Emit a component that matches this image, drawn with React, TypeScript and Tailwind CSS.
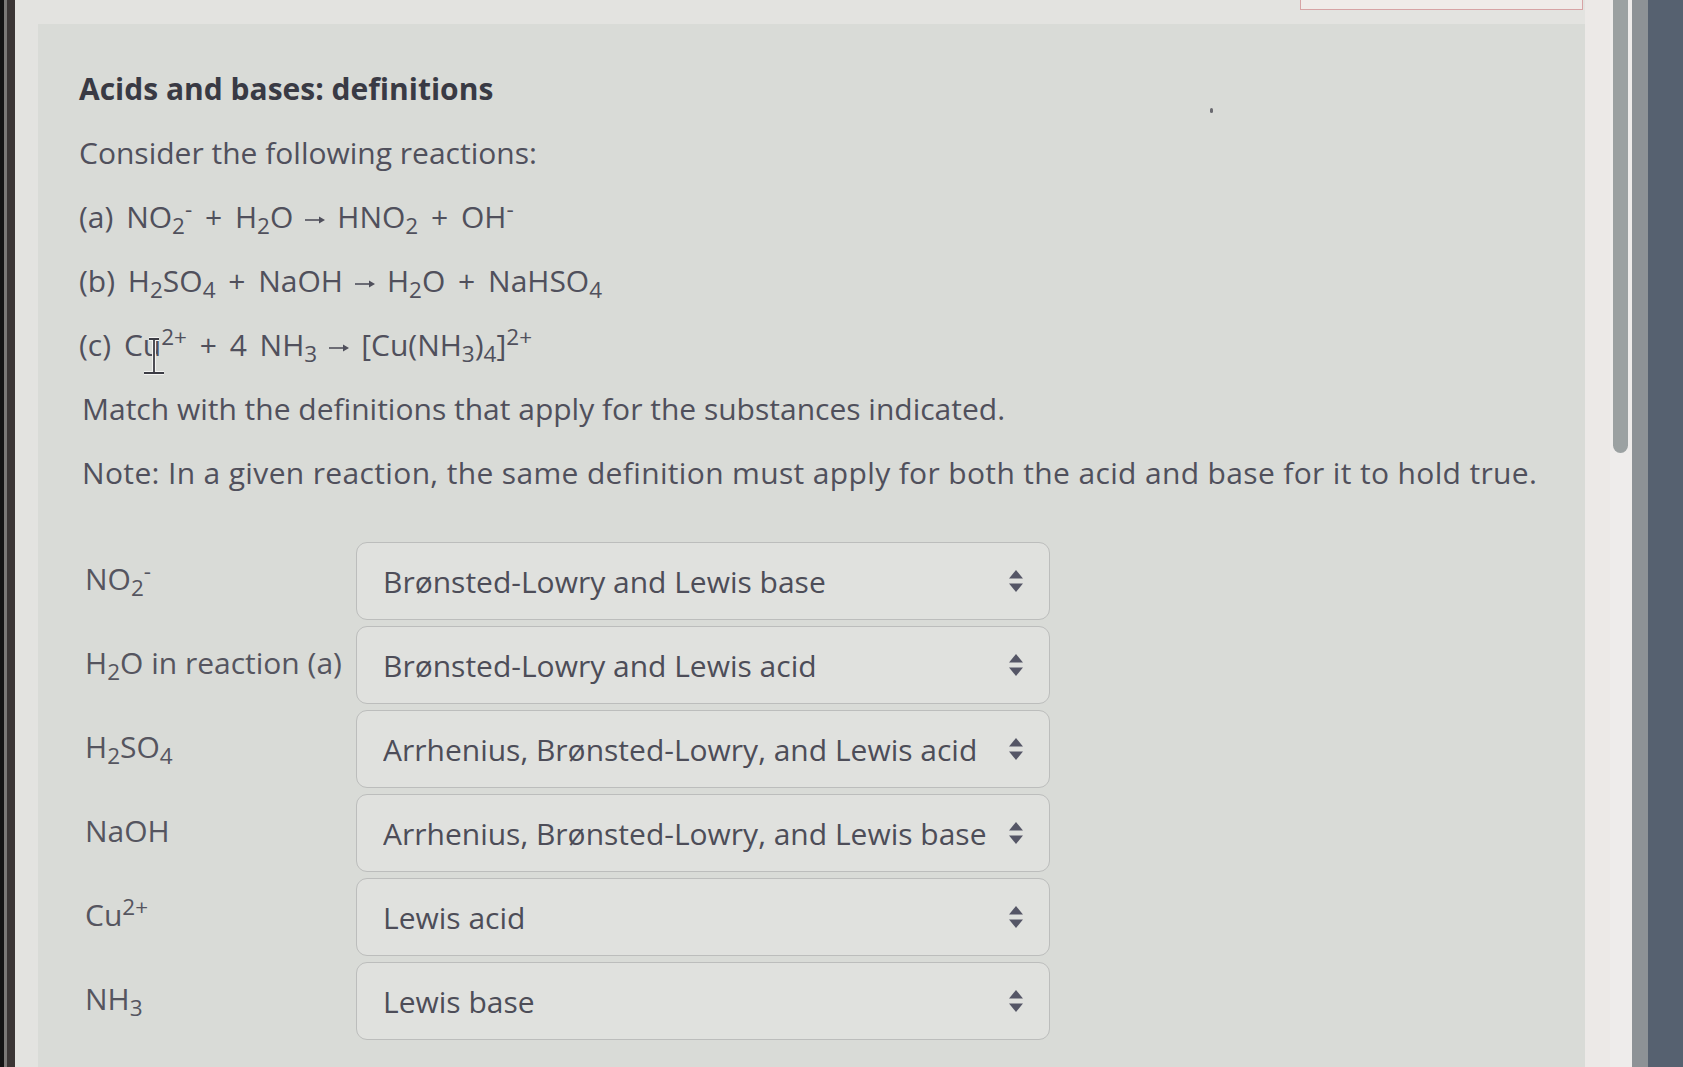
import React from "react";

const font = "font-['Open_Sans','Noto_Sans',sans-serif]";

const rows: { label: React.ReactNode; value: string }[] = [
  { label: <>NO<sub>2</sub><sup>-</sup></>, value: "Brønsted-Lowry and Lewis base" },
  { label: <>H<sub>2</sub>O in reaction (a)</>, value: "Brønsted-Lowry and Lewis acid" },
  { label: <>H<sub>2</sub>SO<sub>4</sub></>, value: "Arrhenius, Brønsted-Lowry, and Lewis acid" },
  { label: <>NaOH</>, value: "Arrhenius, Brønsted-Lowry, and Lewis base" },
  { label: <>Cu<sup>2+</sup></>, value: "Lewis acid" },
  { label: <>NH<sub>3</sub></>, value: "Lewis base" },
];

function Arrows() {
  return (
    <svg
      width="16"
      height="24"
      viewBox="0 0 16 24"
      className="pointer-events-none absolute right-[26px] top-1/2 -translate-y-1/2"
    >
      <path d="M8 1 L15 9.5 H1 Z" fill="#555666" />
      <path d="M1 14.5 H15 L8 23 Z" fill="#555666" />
    </svg>
  );
}

// reaction arrow
function Arrow() {
  return (
    <svg width="22" height="10" viewBox="0 0 22 10" className="mx-[11px] inline-block align-middle">
      <path d="M1 5 H17" stroke="#50505c" strokeWidth="1.6" />
      <path d="M15 1.5 L21 5 L15 8.5 Z" fill="#50505c" />
    </svg>
  );
}

function IBeam() {
  return (
    <svg
      width="26"
      height="42"
      viewBox="0 0 26 42"
      className="pointer-events-none absolute left-[17px] top-[12px]"
    >
      <g stroke="#f4f4f2" strokeWidth="4" fill="none">
        <path d="M8 3 H18 M13 3 V37 M3 37 H23" />
      </g>
      <g stroke="#3c3c44" strokeWidth="1.8" fill="none">
        <path d="M8 3 H18 M13 3 V37 M3 37 H23" />
      </g>
    </svg>
  );
}

export default function App() {
  return (
    <div className={`flex h-[1067px] w-full overflow-hidden bg-[#e3e3e0] ${font}`}>
      {/* left bezel */}
      <div className="flex h-full w-[15px] shrink-0">
        <div className="w-[4px] bg-[#141414]" />
        <div className="w-[3px] bg-[#7a7876]" />
        <div className="w-[8px] bg-[#3b3635]" />
      </div>

      {/* page */}
      <div className="flex h-full w-[1570px] shrink-0 flex-col">
        <div className="flex h-[24px] shrink-0 justify-end pr-[2px]">
          <div className="h-[10px] w-[283px] border-x border-b border-[#d7a3a5] bg-[#f0ebe9]" />
        </div>
        <div className="flex flex-1">
          <div className="w-[23px] shrink-0" />
          <div className="relative flex-1 bg-[#d9dbd7] pl-[41px] pt-[42px] text-[#50505c]">
            <span className="absolute left-[1172px] top-[84px] h-[5px] w-[3px] rounded-full bg-[#6a6a70]" />

            <div className="flex flex-col gap-[19px] text-[30px] leading-[45px]">
              <h1 className="font-bold text-[#393a44]">Acids and bases: definitions</h1>
              <p>Consider the following reactions:</p>
              <p className="[word-spacing:5px]">
                (a) NO<sub>2</sub><sup>-</sup> + H<sub>2</sub>O
                <Arrow />
                HNO<sub>2</sub> + OH<sup>-</sup>
              </p>
              <p className="[word-spacing:5px]">
                (b) H<sub>2</sub>SO<sub>4</sub> + NaOH
                <Arrow />
                H<sub>2</sub>O + NaHSO<sub>4</sub>
              </p>
              <p className="[word-spacing:5px]">
                (c){" "}
                <span className="relative">
                  Cu<sup>2+</sup>
                  <IBeam />
                </span>{" "}
                + 4 NH<sub>3</sub>
                <Arrow />
                [Cu(NH<sub>3</sub>)<sub>4</sub>]<sup>2+</sup>
              </p>
              <p className="pl-[3px]">Match with the definitions that apply for the substances indicated.</p>
              <p className="pl-[3px] tracking-[0.35px]">
                Note: In a given reaction, the same definition must apply for both the acid and base for it to hold true.
              </p>
            </div>

            <div className="mt-[47px] grid grid-cols-[277px_694px] gap-y-[6px] text-[30px]">
              {rows.map((row, i) => (
                <React.Fragment key={i}>
                  <div className="flex items-center pb-[4px] pl-[6px] leading-none text-[#55555f]">
                    <span>{row.label}</span>
                  </div>
                  <div className="relative">
                    <select
                      defaultValue={row.value}
                      className="h-[78px] w-full appearance-none rounded-[11px] border-[1.5px] border-[#bcbdbc] bg-[#e0e1de] pl-[26px] pr-[50px] text-[30px] text-[#4d4d58] outline-none"
                    >
                      <option>{row.value}</option>
                    </select>
                    <Arrows />
                  </div>
                </React.Fragment>
              ))}
            </div>
          </div>
        </div>
      </div>

      {/* right margin + scrollbar */}
      <div className="h-full w-[25px] shrink-0 bg-[#ece9e7]" />
      <div className="flex h-full w-[22px] shrink-0 bg-[#eeeceb]">
        <div className="ml-[3px] h-[453px] w-[15px] rounded-b-[8px] bg-[#9ba1a2]" />
      </div>
      <div className="h-full w-[16px] shrink-0 bg-[#8d9296]" />
      <div className="h-full flex-1 bg-[#566170]" />
    </div>
  );
}
